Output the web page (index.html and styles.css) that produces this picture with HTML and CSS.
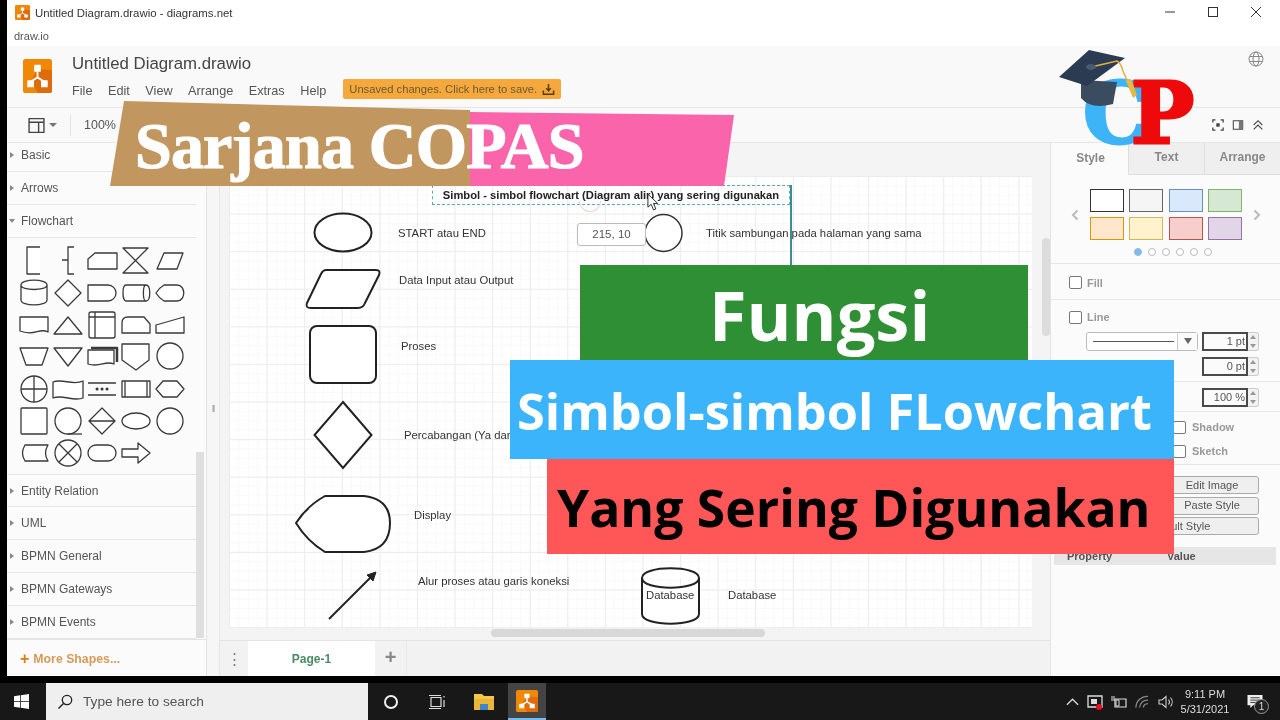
FILE: index.html
```html
<!DOCTYPE html>
<html lang="en">
<head>
<meta charset="utf-8">
<title>Sarjana COPAS</title>
<link rel="stylesheet" href="styles.css">
</head>
<body>
<svg class="defs" width="0" height="0"><defs>
<g id="dio"><rect width="24" height="24" rx="2" fill="#f08705"/><path d="M24 8V22a2 2 0 0 1-2 2H12L7 15l5-8z" fill="#df6c0c"/><path d="M12 8v5M12 13L6.500 16M12 13l5.500 3" stroke="#fff" stroke-width="1.500" fill="none"/><rect x="9.200" y="4" width="5.600" height="5" rx=".6" fill="#fff"/><rect x="3.500" y="15" width="5.600" height="5" rx=".6" fill="#fff"/><rect x="14.900" y="15" width="5.600" height="5" rx=".6" fill="#fff"/></g>
</defs></svg>
<div class="window">
  <header class="titlebar">
    <svg class="ti-logo" viewBox="0 0 24 24"><use href="#dio"/></svg>
    <span class="ti-text">Untitled Diagram.drawio - diagrams.net</span>
    <div class="controls">
      <svg viewBox="0 0 12 12"><path d="M1 6h10" stroke="#333"/></svg>
      <svg viewBox="0 0 12 12"><rect x="1.500" y="1.500" width="9" height="9" fill="none" stroke="#333"/></svg>
      <svg viewBox="0 0 12 12"><path d="M1 1l10 10M11 1L1 11" stroke="#333"/></svg>
    </div>
  </header>
  <div class="appmenu">draw.io</div>
  <div class="header">
    <svg class="logo" viewBox="0 0 24 24" preserveAspectRatio="none"><use href="#dio"/></svg>
    <div class="head-main">
      <div class="doc-title">Untitled Diagram.drawio</div>
      <div class="menu-row">
        <nav class="menus"><span>File</span><span>Edit</span><span>View</span><span>Arrange</span><span>Extras</span><span>Help</span></nav>
        <button class="save">Unsaved changes. Click here to save.
          <svg viewBox="0 0 14 14" width="13" height="13"><path d="M7 1v7M4.500 5.500L7 8.500l2.500-3M1.500 8v4h11V8" fill="none" stroke="#5a3b08" stroke-width="1.600"/></svg>
        </button>
      </div>
    </div>
    <svg class="globe" viewBox="0 0 16 16"><g fill="none" stroke="#888" stroke-width="1"><circle cx="8" cy="8" r="7"/><ellipse cx="8" cy="8" rx="3" ry="7"/><path d="M1.500 5.500h13M1.500 10.500h13"/></g></svg>
  </div>
  <div class="toolbar">
    <svg class="tb-view" viewBox="0 0 16 16"><path d="M1 1.500h14v13H1zM1 5h14M10 5v9.500" fill="none" stroke="#444" stroke-width="1.300"/></svg>
    <i class="caret"></i>
    <i class="tb-sep"></i>
    <span class="zoomlevel">100%</span>
    <div class="tb-right">
      <svg viewBox="0 0 14 14"><path d="M1 4V1h3M10 1h3v3M13 10v3h-3M4 13H1v-3" fill="none" stroke="#444" stroke-width="1.500"/><rect x="5" y="5" width="4" height="4" fill="#444"/></svg>
      <svg viewBox="0 0 14 14"><path d="M1.500 2h11v10h-11z" fill="none" stroke="#444" stroke-width="1.200"/><rect x="8" y="2" width="4.500" height="10" fill="#777"/></svg>
      <svg viewBox="0 0 14 14"><path d="M2 7l5-5 5 5M2 12l5-5 5 5" fill="none" stroke="#444" stroke-width="1.300"/></svg>
    </div>
  </div>
  <div class="main">
    <aside class="sidebar">
      <div class="sb-scroll">
        <div class="sec sec-first"><i class="tri"></i>Basic</div>
        <div class="sec"><i class="tri"></i>Arrows</div>
        <div class="sec"><i class="tri tri-open"></i>Flowchart</div>
        <div class="palette">
          <svg viewBox="0 0 34 32"><path d="M23 2H10v27h13"/></svg>
          <svg viewBox="0 0 34 32"><path d="M23 2h-6v13h-6m6 0v14h6"/></svg>
          <svg viewBox="0 0 34 32"><path d="M3 24V14l7-6h22v16z"/></svg>
          <svg viewBox="0 0 34 32"><path d="M4 3h25L4 28h25z"/></svg>
          <svg viewBox="0 0 34 32"><path d="M4 24L11 8h19l-6 16z"/></svg>

          <svg viewBox="0 0 34 32"><path d="M4 8c0-6.500 26-6.500 26 0v15c0 6.500-26 6.500-26 0zM4 8c0 6 26 6 26 0"/></svg>
          <svg viewBox="0 0 34 32"><path d="M17 3l13 13-13 13L4 16z"/></svg>
          <svg viewBox="0 0 34 32"><path d="M3 8h20a8 8 0 0 1 0 16H3z"/></svg>
          <svg viewBox="0 0 34 32"><path d="M7 8h20c5 0 5 16 0 16H7c-4 0-4-16 0-16zM27 8c-3.500 0-3.500 16 0 16"/></svg>
          <svg viewBox="0 0 34 32"><path d="M3 16q3-5 8-8h13c9 0 9 16 0 16H11q-5-3-8-8z"/></svg>

          <svg viewBox="0 0 34 32"><path d="M3 8h28v15c-9-5-13 5-28-1z"/></svg>
          <svg viewBox="0 0 34 32"><path d="M3 25L17 8l14 17z"/></svg>
          <svg viewBox="0 0 34 32"><rect x="4" y="3" width="26" height="26" rx="2"/><path d="M10 3v26M4 8h26"/></svg>
          <svg viewBox="0 0 34 32"><path d="M3 24V14q0-6 6-6h16l6 7v9z"/></svg>
          <svg viewBox="0 0 34 32"><path d="M3 24v-8l28-8v16z"/></svg>

          <svg viewBox="0 0 34 32"><path d="M3 7h28l-6 17H9z"/></svg>
          <svg viewBox="0 0 34 32"><path d="M3 7h28L17 25z"/></svg>
          <svg viewBox="0 0 34 32"><path class="thick" d="M6 7h26v14"/><path d="M3 9h26v14c-9-4-14 4-26 0z"/></svg>
          <svg viewBox="0 0 34 32"><path d="M3 3h27v16L17 29 3 19z"/></svg>
          <svg viewBox="0 0 34 32"><circle cx="17" cy="15" r="13"/></svg>

          <svg viewBox="0 0 34 32"><circle cx="17" cy="16" r="13"/><path d="M17 3v26M4 16h26"/></svg>
          <svg viewBox="0 0 34 32"><path d="M2 9c9-4 20 4 30-1v17c-10 4-20-4-30 0z"/></svg>
          <svg viewBox="0 0 34 32"><path d="M3 10h28M3 22h28"/><path class="dots" d="M12 16h.1M17 16h.1M22 16h.1"/></svg>
          <svg viewBox="0 0 34 32"><path d="M3 8h28v16H3zM6 8v16M28 8v16"/></svg>
          <svg viewBox="0 0 34 32"><path d="M3 16l7-8h14l7 8-7 8H10z"/></svg>

          <svg viewBox="0 0 34 32"><rect x="4" y="3" width="26" height="26" rx="1"/></svg>
          <svg viewBox="0 0 34 32"><circle cx="17" cy="16" r="13"/><path d="M17 29h14"/></svg>
          <svg viewBox="0 0 34 32"><path d="M17 3l13 13-13 13L4 16zM4 16h26"/></svg>
          <svg viewBox="0 0 34 32"><ellipse cx="17" cy="16" rx="14" ry="8"/></svg>
          <svg viewBox="0 0 34 32"><circle cx="17" cy="16" r="13"/></svg>

          <svg viewBox="0 0 34 32"><path d="M8 8h23q-5 8 0 16H8q-5-8 0-16z"/></svg>
          <svg viewBox="0 0 34 32"><circle cx="17" cy="16" r="13"/><path d="M8 7l18 18M26 7L8 25"/></svg>
          <svg viewBox="0 0 34 32"><rect x="3" y="8" width="28" height="16" rx="8"/></svg>
          <svg viewBox="0 0 34 32"><path d="M3 12h16V6l12 10-12 10v-6H3z"/></svg>
        </div>
        <div class="sec sec-top"><i class="tri"></i>Entity Relation</div>
        <div class="sec"><i class="tri"></i>UML</div>
        <div class="sec"><i class="tri"></i>BPMN General</div>
        <div class="sec"><i class="tri"></i>BPMN Gateways</div>
        <div class="sec"><i class="tri"></i>BPMN Events</div>
        <i class="sb-thumb"></i>
      </div>
      <div class="more"><b class="plus">+</b> More Shapes...</div>
    </aside>
    <div class="splitter"><span class="grip">||</span></div>
    <section class="editor">
      <div class="canvas-wrap">
        <div class="canvas">
          <div class="node title-box">Simbol - simbol flowchart (Diagram alir) yang sering digunakan</div>
          <i class="node vline"></i>
          <i class="node ripple"></i>
          <svg class="node shapes" viewBox="0 0 803 452" width="803" height="452">
            <ellipse cx="114" cy="56.500" rx="28.500" ry="19"/>
            <path d="M97 94h50q5 0 3 5L136 127q-2 5-7 5H82q-6 0-4-5L92 98q2-4 5-4z"/>
            <rect x="81" y="150" width="66" height="57" rx="7"/>
            <path d="M114 226l28.500 33-28.500 33-28.500-33z"/>
            <path d="M67 347Q78 330 96 320H135Q161 323 161 347Q161 373 135 376H96Q78 365 67 347z"/>
            <path d="M100 443l46-46"/>
            <path class="fillhead" d="M147 396l-3 9-6-6z"/>
            <path d="M413 402c0-13 57-13 57 0v36c0 13-57 13-57 0zM413 402c0 13 57 13 57 0"/>
            <circle class="thin" cx="434.500" cy="57" r="18.500"/>
          </svg>
          <span class="node lbl l1">START atau END</span>
          <span class="node lbl l2">Data Input atau Output</span>
          <span class="node lbl l3">Proses</span>
          <span class="node lbl l4">Percabangan (Ya dan Tidak)</span>
          <span class="node lbl l5">Display</span>
          <span class="node lbl l6">Alur proses atau garis koneksi</span>
          <span class="node lbl l7">Database</span>
          <span class="node lbl l8">Database</span>
          <span class="node lbl l9">Titik sambungan pada halaman yang sama</span>
          <div class="node coord">215, 10</div>
          <svg class="node cursor" viewBox="0 0 14 20"><path d="M1 1v14l3.500-3 2.500 6 2.500-1-2.500-6h4.500z" fill="#fff" stroke="#222"/></svg>
        </div>
        <i class="v-thumb"></i>
        <i class="h-thumb"></i>
      </div>
      <div class="tabs">
        <span class="tab-menu">&#8942;</span>
        <span class="tab-active">Page-1</span>
        <span class="tab-add">+</span>
      </div>
    </section>
    <aside class="format">
      <div class="f-tabs"><span class="f-on">Style</span><span>Text</span><span>Arrange</span></div>
      <div class="f-swatches">
        <div class="sw-row">
          <svg class="chev" viewBox="0 0 8 12"><path d="M6.500 1.500L2 6l4.500 4.500" fill="none" stroke="#bbb" stroke-width="2"/></svg>
          <div class="sw-grid">
            <i class="sw s1"></i><i class="sw s2"></i><i class="sw s3"></i><i class="sw s4"></i>
            <i class="sw s5"></i><i class="sw s6"></i><i class="sw s7"></i><i class="sw s8"></i>
          </div>
          <svg class="chev chev-r" viewBox="0 0 8 12"><path d="M1.500 1.500L6 6l-4.500 4.500" fill="none" stroke="#bbb" stroke-width="2"/></svg>
        </div>
        <div class="sw-dots"><i class="dot dot-on"></i><i class="dot"></i><i class="dot"></i><i class="dot"></i><i class="dot"></i><i class="dot"></i></div>
      </div>
      <div class="f-fill"><i class="cb"></i>Fill</div>
      <div class="f-line">
        <div class="line-head"><i class="cb"></i>Line</div>
        <div class="ctl-row">
          <div class="select"><i class="sel-line"></i><i class="sel-arrow"></i></div>
          <div class="num"><span class="num-v">1 pt</span><i class="spin"></i></div>
        </div>
        <div class="ctl-row ctl-end"><div class="num"><span class="num-v">0 pt</span><i class="spin"></i></div></div>
      </div>
      <div class="f-opacity"><div class="ctl-row ctl-end"><div class="num"><span class="num-v">100 %</span><i class="spin"></i></div></div></div>
      <div class="f-checks">
        <div class="chk"><i class="cb"></i>Shadow</div>
        <div class="chk"><i class="cb"></i>Sketch</div>
      </div>
      <div class="f-btns">
        <button class="fbtn">Edit Image</button>
        <button class="fbtn">Paste Style</button>
        <button class="fbtn fbtn-wide">Set as Default Style</button>
      </div>
      <div class="f-prop"><span class="p-name">Property</span><span class="p-val">Value</span></div>
    </aside>
  </div>
</div>
<footer class="taskbar">
  <svg class="start" viewBox="0 0 16 16"><path d="M0 2.300l6.500-.9v6.200H0zM7.300 1.300L16 0v7.600H7.300zM0 8.400h6.500v6.200L0 13.700zM7.300 8.400H16V16l-8.700-1.300z" fill="#fff"/></svg>
  <div class="search">
    <svg viewBox="0 0 16 16" width="16" height="16"><circle cx="10" cy="6" r="4.700" fill="none" stroke="#222" stroke-width="1.300"/><path d="M6.500 9.500L1.500 14.500" stroke="#222" stroke-width="1.500"/></svg>
    <span>Type here to search</span>
  </div>
  <div class="tb-cortana"><i class="ring"></i></div>
  <div class="tb-cell">
    <svg viewBox="0 0 16 16" width="16" height="16"><path d="M2 3.500h10v9H2zM0 1.500h12M0 14.500h12M15 2v1.500M15 6v7" fill="none" stroke="#ddd" stroke-width="1.200"/></svg>
  </div>
  <div class="tb-cell">
    <svg viewBox="0 0 22 18" width="22" height="18"><path d="M1 1h8l2 2h10v14H1z" fill="#f6c744"/><path d="M1 6h20v11H1z" fill="#e9b53a"/><rect x="7" y="11" width="8" height="6" fill="#3a86c8"/></svg>
  </div>
  <div class="tb-app"><svg viewBox="0 0 24 24" width="22" height="22"><use href="#dio"/></svg></div>
  <div class="tray">
    <svg viewBox="0 0 14 8" width="13" height="8"><path d="M1 7l6-6 6 6" fill="none" stroke="#ddd" stroke-width="1.300"/></svg>
    <svg class="tray-meet" viewBox="0 0 16 16" width="16" height="16"><path d="M1 2h14v11H1z" fill="none" stroke="#ddd" stroke-width="1.300"/><path d="M4 5h6v5H4z" fill="#ddd"/><circle cx="12" cy="13" r="3" fill="#e81123"/></svg>
    <svg viewBox="0 0 16 14" width="16" height="14"><path d="M4 4h11v8H4z" fill="none" stroke="#ddd" stroke-width="1.200"/><path d="M5 5h3v6H5zM1 1v5M3 1v5" fill="none" stroke="#ddd"/></svg>
    <svg viewBox="0 0 16 14" width="15" height="14"><path d="M1 13a12 12 0 0 1 13-12M5 13a8 8 0 0 1 9-8M9 13a4 4 0 0 1 5-4" fill="none" stroke="#888" stroke-width="1.300"/></svg>
    <svg viewBox="0 0 16 14" width="16" height="14"><path d="M1 5h3l4-3.500v11L4 9H1zM10.500 4.500a4 4 0 0 1 0 5M12.500 2.500a7 7 0 0 1 0 9" fill="none" stroke="#ccc" stroke-width="1.100"/></svg>
  </div>
  <div class="clock"><span>9:11 PM</span><span>5/31/2021</span></div>
  <div class="notify">
    <svg viewBox="0 0 16 16" width="16" height="15"><path d="M0 1h16v11H6l-3 3v-3H0z" fill="#eee"/><path d="M3 4h10M3 6.500h10M3 9h7" stroke="#333"/></svg>
    <span class="n-badge">1</span>
  </div>
</footer>

<div class="banner-top">
  <i class="bt-tan"></i>
  <i class="bt-pink"></i>
  <span class="bt-text">Sarjana COPAS</span>
</div>
<div class="brand">
  <span class="b-c">C</span><span class="b-p">P</span>
  <svg class="cap" viewBox="0 0 80 62"><path d="M22 30v18q10 12 32 6l4-22z" fill="#3b4c60"/><path d="M30 0L66 8 28 36 0 27z" fill="#2a3b52"/><path d="M32 17l26-6q4 2 6 10l6 14" fill="none" stroke="#e3b23c" stroke-width="1.500"/><ellipse cx="32" cy="17" rx="5" ry="3" fill="#4a5b70"/><path d="M67 31l5-2 6 16-4 3z" fill="#e8b93f"/></svg>
</div>
<div class="promo">
  <div class="p-green">Fungsi</div>
  <div class="p-blue">Simbol-simbol FLowchart</div>
  <div class="p-red">Yang Sering Digunakan</div>
</div>
</body>
</html>
```
FILE: styles.css
```css
* { box-sizing: border-box; }
html, body { margin: 0; height: 100%; }
body {
  width: 1280px; height: 720px; overflow: hidden; position: relative;
  background: #000; font-family: "Liberation Sans", Arial, sans-serif; color: #333;
}
i { display: block; font-style: normal; }
.defs { position: absolute; }
button { font-family: inherit; }

.window {
  margin-left: 7px; width: 1273px; height: 676px; background: #fbfbfb;
  display: flex; flex-direction: column; filter: blur(.35px);
}
.titlebar { height: 26px; display: flex; align-items: center; background: #fff; flex: none; }
.ti-logo { width: 15px; height: 15px; margin-left: 8px; margin-top: -1px; }
.ti-text { margin-left: 5px; font-size: 11.400px; color: #333; }
.controls { margin-left: auto; display: flex; gap: 31px; padding-right: 18px; margin-top: -3px; }
.controls svg { width: 12px; height: 12px; }
.appmenu { height: 20px; flex: none; background: #fff; font-size: 11px; color: #555; padding: 4px 0 0 7px; }

.header { height: 61px; flex: none; display: flex; background: #f9f9f9; position: relative; }
.logo { width: 29px; height: 34px; margin: 13px 0 0 16px; flex: none; }
.head-main { margin-left: 20px; padding-top: 8px; }
.doc-title { font-size: 16.800px; line-height: 20px; color: #444; }
.menu-row { display: flex; align-items: flex-start; margin-top: 5px; }
.menus { display: flex; gap: 15.500px; font-size: 12.700px; line-height: 20px; color: #555; padding-top: 2px; }
.save {
  margin-left: 17px; height: 20px; padding: 0 6px; border: 0; border-radius: 2px; background: #f5a83c;
  font-size: 11.200px; color: #6d5a35; display: flex; align-items: center; gap: 5px; white-space: nowrap;
}
.globe { width: 16px; height: 16px; position: absolute; right: 16px; top: 5px; }

.toolbar {
  height: 36px; flex: none; display: flex; align-items: center; background: #f9f9f9;
  border-top: 1px solid #e6e6e6; border-bottom: 1px solid #e6e6e6; padding-left: 21px;
}
.tb-view { width: 17px; height: 17px; }
.caret { width: 0; height: 0; margin-left: 4px; border: 4px solid transparent; border-top-color: #777; border-bottom: 0; }
.tb-sep { width: 1px; height: 22px; background: #e4e4e4; margin-left: 13px; }
.zoomlevel { margin-left: 13px; font-size: 12.500px; color: #555; }
.tb-right { margin-left: auto; display: flex; gap: 8px; padding-right: 16px; }
.tb-right svg { width: 12px; height: 12px; }

.main { flex: 1; min-height: 0; display: flex; }
.sidebar { width: 200px; flex: none; display: flex; flex-direction: column; background: #fbfbfb; border-right: 1px solid #e4e4e4; }
.sb-scroll { flex: 1; position: relative; }
.sec {
  height: 33px; margin-right: 10px; border-bottom: 1px solid #e6e6e6; display: flex; align-items: center;
  font-size: 12px; color: #555;
}
.sec-first { height: 29px; padding-bottom: 4px; }
.sec-top { border-top: 1px solid #e6e6e6; }
.tri { width: 0; height: 0; margin: 0 7px 0 3px; border: 3px solid transparent; border-left: 4px solid #888; border-right: 0; }
.tri-open { border: 3px solid transparent; border-top: 4px solid #888; border-bottom: 0; margin-right: 6px; margin-left: 2px; }
.palette {
  height: 236px; padding: 7px 0 0 10px; margin-right: 10px;
  display: grid; grid-template-columns: repeat(5, 34px); grid-auto-rows: 32px;
}
.palette svg { width: 34px; height: 32px; fill: #fff; stroke: #3a3a3a; stroke-width: 1.300; stroke-linejoin: round; }
.palette .thick { fill: none; stroke-width: 2.500; }
.palette .dots { fill: none; stroke-width: 3; stroke-linecap: round; }
.sb-thumb { position: absolute; right: 2px; top: 309px; width: 8px; height: 186px; background: #dfdfdf; }
.more { height: 37px; flex: none; border-top: 1px solid #e4e4e4; font-size: 12.300px; font-weight: 700; color: #d79a58; display: flex; align-items: center; padding-left: 13px; padding-top: 1px; gap: 4px; }
.plus { color: #e07b10; font-size: 16px; line-height: 1; }

.splitter { width: 13px; flex: none; background: #f6f6f6; border-right: 1px solid #e6e6e6; display: flex; align-items: center; justify-content: center; }
.grip { font-size: 8px; color: #777; letter-spacing: -1px; transform: translateY(-2px); }

.editor { width: 831px; flex: none; display: flex; flex-direction: column; border-right: 1px solid #e4e4e4; }
.canvas-wrap { flex: 1; position: relative; background: #f4f4f4; overflow: hidden; }
.canvas {
  position: absolute; left: 9px; top: 33px; width: 803px; height: 452px; background-color: #fff;
  background-image:
    linear-gradient(#ececec 1px, transparent 1px),
    linear-gradient(90deg, #ececec 1px, transparent 1px),
    linear-gradient(#f9f9f9 1px, transparent 1px),
    linear-gradient(90deg, #f9f9f9 1px, transparent 1px);
  background-size: 37.600px 37.600px, 37.600px 37.600px, 9.400px 9.400px, 9.400px 9.400px;
  background-position: 0 0;
}
.node { position: absolute; }
.shapes { left: 0; top: 0; fill: #fff; stroke: #222; stroke-width: 2; }
.shapes .thin { stroke: #333; stroke-width: 1.500; }
.shapes .fillhead { fill: #222; stroke-width: 1; }
.title-box {
  left: 203px; top: 9px; width: 358px; height: 20px; border: 1px dashed #5fa8b5;
  font-size: 11.200px; font-weight: 700; color: #222; text-align: center; line-height: 18px; white-space: nowrap;
}
.vline { left: 561px; top: 9px; width: 1.500px; height: 90px; background: #3f8c99; }
.ripple { left: 350px; top: 25px; width: 22px; height: 11px; border: 1px solid #f3d5cf; border-top: 0; border-radius: 0 0 11px 11px; }
.lbl { font-size: 11.300px; color: #333; white-space: nowrap; line-height: 14px; }
.l1 { left: 169px; top: 50px; }
.l2 { left: 170px; top: 97px; }
.l3 { left: 172px; top: 163px; }
.l4 { left: 175px; top: 252px; }
.l5 { left: 185px; top: 332px; }
.l6 { left: 189px; top: 398px; }
.l7 { left: 417px; top: 412px; }
.l8 { left: 499px; top: 412px; }
.l9 { left: 477px; top: 50px; }
.coord { left: 348px; top: 47px; width: 69px; height: 23px; background: #fff; border: 1px solid #bbb; border-radius: 3px; font-size: 11.500px; color: #555; text-align: center; line-height: 21px; }
.cursor { left: 418px; top: 17px; width: 13px; height: 19px; }
.v-thumb { position: absolute; left: 822px; top: 95px; width: 8px; height: 98px; background: #dcdcdc; border-radius: 4px; }
.h-thumb { position: absolute; left: 271px; top: 486px; width: 274px; height: 8px; background: #d8d8d8; border-radius: 4px; }
.tabs { height: 36px; flex: none; display: flex; align-items: stretch; background: #f2f2f2; border-top: 1px solid #e4e4e4; }
.tab-menu { width: 28px; text-align: center; color: #777; font-size: 15px; line-height: 36px; }
.tab-active { width: 127px; background: #fff; color: #4a8a64; font-size: 12px; font-weight: 700; text-align: center; line-height: 36px; }
.tab-add { width: 32px; text-align: center; color: #888; font-size: 20px; font-weight: 700; line-height: 33px; border-right: 1px solid #e9e9e9; }

.format { flex: 1; background: #fbfbfb; min-width: 0; }
.f-tabs { height: 32px; display: flex; font-size: 12px; font-weight: 700; color: #888; }
.f-tabs span { flex: 1; text-align: center; line-height: 28px; background: #efefef; border-left: 1px solid #dedede; border-bottom: 1px solid #dedede; }
.f-tabs .f-on { background: #fbfbfb; border: 0; line-height: 30px; padding-left: 2px; }
.f-swatches { height: 89px; border-bottom: 1px solid #e6e6e6; padding-top: 14px; }
.sw-row { display: flex; align-items: center; padding-left: 20px; }
.chev { width: 8px; height: 12px; margin-right: 11px; flex: none; }
.chev-r { margin: 0 0 0 11px; }
.sw-grid { display: grid; grid-template-columns: repeat(4, 34px); grid-auto-rows: 23px; column-gap: 5.300px; row-gap: 5px; }
.sw { border: 1px solid #888; }
.s1 { background: #fff; border-color: #333; }
.s2 { background: #f5f5f5; border-color: #666; }
.s3 { background: #dae8fc; border-color: #6c8ebf; }
.s4 { background: #d5e8d4; border-color: #82b366; }
.s5 { background: #ffe6cc; border-color: #d79b00; }
.s6 { background: #fff2cc; border-color: #d6b656; }
.s7 { background: #f8cecc; border-color: #b85450; }
.s8 { background: #e1d5e7; border-color: #9673a6; }
.sw-dots { display: flex; gap: 6px; padding: 8px 0 0 83px; }
.dot { width: 8px; height: 8px; border-radius: 50%; border: 1px solid #bbb; background: #fff; }
.dot-on { background: #83bbe5; border-color: #83bbe5; }
.cb { width: 13px; height: 13px; border: 1px solid #777; border-radius: 2px; background: #fff; margin-right: 5px; flex: none; }
.f-fill { height: 36px; border-bottom: 1px solid #e6e6e6; display: flex; align-items: center; padding: 2px 0 0 18px; font-size: 11px; font-weight: 700; color: #999; }
.f-line { height: 82px; border-bottom: 1px solid #e6e6e6; padding-top: 9px; }
.line-head { height: 16px; display: flex; align-items: center; padding-left: 18px; font-size: 11px; font-weight: 700; color: #999; margin-bottom: 7px; }
.ctl-row { display: flex; padding: 0 21px 0 35px; gap: 4px; margin-bottom: 6px; }
.ctl-end { justify-content: flex-end; }
.select { width: 112px; height: 19px; border: 1px solid #bbb; border-radius: 3px; background: #fff; position: relative; display: flex; align-items: center; padding-left: 6px; }
.sel-line { width: 81px; height: 1px; background: #555; }
.sel-arrow { position: absolute; right: 0; top: 0; width: 20px; height: 17px; border-left: 1px solid #ccc; background: #fafafa; }
.sel-arrow::after { content: ""; position: absolute; left: 6px; top: 5px; border: 4px solid transparent; border-top: 6px solid #666; border-bottom: 0; }
.num { width: 57px; height: 19px; display: flex; }
.num-v { width: 46px; border: 2px solid #4a4a4a; font-size: 11px; color: #555; text-align: right; line-height: 15px; padding-right: 1px; background: #fbfbfb; }
.spin { width: 11px; border: 1px solid #ccc; border-left: 0; border-radius: 0 3px 3px 0; position: relative; background: #f2f2f2; }
.spin::before, .spin::after { content: ""; position: absolute; left: 2px; border: 3px solid transparent; }
.spin::before { top: 2px; border-bottom: 4px solid #999; border-top: 0; }
.spin::after { bottom: 2px; border-top: 4px solid #999; border-bottom: 0; }
.f-opacity { height: 30px; border-bottom: 1px solid #e6e6e6; padding-top: 6px; }
.f-checks { height: 53px; border-bottom: 1px solid #e6e6e6; padding: 3px 0 0 122px; }
.chk { height: 24px; display: flex; align-items: center; font-size: 11px; font-weight: 700; color: #999; }
.chk .cb { margin-right: 6px; }
.f-btns { height: 71px; display: flex; flex-direction: column; align-items: flex-end; gap: 2.500px; padding: 11px 21px 0 0; }
.fbtn { width: 94px; height: 18px; padding: 0; border: 1px solid #aaa; border-radius: 3px; background: #efefef; font-size: 11px; color: #555; line-height: 15px; }
.fbtn-wide { width: 194px; }
.f-prop { margin: 11px 4px 0 3px; height: 18px; background: #e6e6e6; display: flex; font-size: 11px; font-weight: 700; color: #555; line-height: 19px; }
.p-name { width: 111px; padding-left: 13px; }
.p-val { padding-left: 2px; }

.taskbar { position: absolute; left: 0; top: 683px; width: 1280px; height: 37px; background: #181818; display: flex; align-items: center; filter: blur(.35px); }
.start { width: 15px; height: 15px; margin-left: 14px; }
.search { width: 322px; height: 37px; margin-left: 17px; background: #efefef; display: flex; align-items: center; padding-left: 11px; gap: 10px; font-size: 13.700px; color: #555; flex: none; }
.tb-cortana { width: 45px; display: flex; justify-content: center; }
.ring { width: 14px; height: 14px; border: 2px solid #eee; border-radius: 50%; }
.tb-cell { width: 47px; display: flex; justify-content: center; }
.tb-app { width: 38px; height: 37px; margin-left: 1px; background: #444; border-bottom: 2px solid #76b9ed; display: flex; align-items: center; justify-content: center; }
.tray { margin-left: auto; display: flex; align-items: center; gap: 8px; }
.clock { width: 62px; display: flex; flex-direction: column; align-items: center; font-size: 11px; line-height: 15px; color: #ddd; }
.notify { width: 44px; height: 37px; position: relative; display: flex; align-items: center; padding-left: 11px; }
.n-badge { position: absolute; left: 18px; top: 16px; width: 15px; height: 15px; border-radius: 50%; border: 1px solid #999; background: #222; color: #ddd; font-size: 10px; text-align: center; line-height: 13px; }

.banner-top { position: absolute; left: 110px; top: 101px; width: 624px; height: 86px; }
.bt-tan { position: absolute; left: 0; top: 0; width: 360px; height: 85px; background: #c2965f; clip-path: polygon(14px 0, 360px 9px, 360px 85px, 0 85px); }
.bt-pink { position: absolute; left: 360px; top: 9px; width: 264px; height: 76px; background: #f964aa; clip-path: polygon(0 2px, 264px 5px, 254px 76px, 0 76px); }
.bt-text {
  position: absolute; left: 25px; top: 3px; font-family: "Liberation Serif", serif; font-weight: 700;
  font-size: 66px; line-height: 84px; color: #fff; white-space: nowrap; letter-spacing: -.8px;
  -webkit-text-stroke: 1.200px #fff;
}

.brand { position: absolute; left: 1059px; top: 50px; width: 140px; height: 102px; }
.b-c, .b-p { position: absolute; font-family: "DejaVu Serif", serif; font-weight: 700; line-height: .78; }
.b-c { left: 24px; top: 31px; font-size: 84px; color: #3db3f8; -webkit-text-stroke: 3px #3db3f8; }
.b-p { left: 72px; top: 31px; font-size: 84px; color: #ee0a0a; -webkit-text-stroke: 3px #ee0a0a; }
.cap { position: absolute; left: 0; top: 0; width: 80px; height: 62px; }

.promo { position: absolute; left: 510px; top: 265px; width: 664px; font-family: "Open Sans", sans-serif; font-weight: 700; }
.p-green { margin-left: 70px; width: 448px; height: 95px; background: #2f8f35; color: #fff; font-size: 68.500px; line-height: 100px; padding-left: 129px; }
.p-blue { height: 99px; background: #3cb4fb; color: #fff; font-size: 50.500px; line-height: 101px; padding-left: 7px; white-space: nowrap; }
.p-red { margin-left: 37px; height: 95px; background: #ff5757; color: #000; font-size: 51.600px; line-height: 96px; padding-left: 10px; white-space: nowrap; }
```
